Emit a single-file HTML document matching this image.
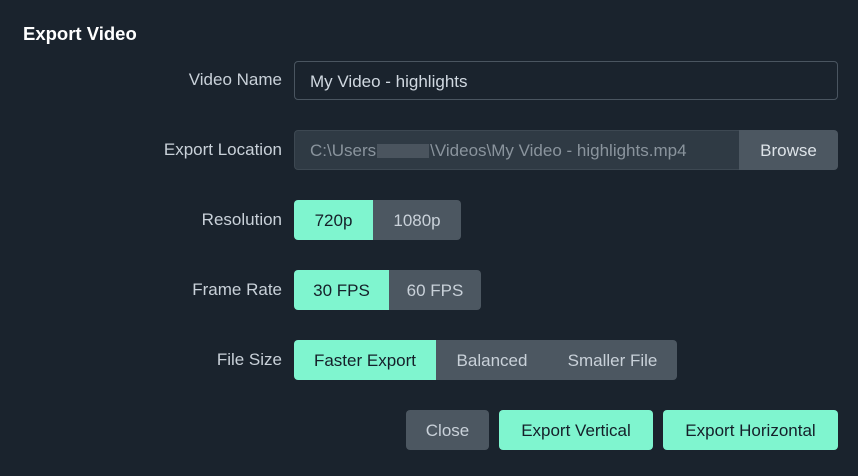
<!DOCTYPE html>
<html><head><style>
*{box-sizing:border-box;margin:0;padding:0}
body{width:858px;height:476px;background:#1a232d;font-family:"Liberation Sans",sans-serif;font-size:17px;position:relative;overflow:hidden;color:#c9d1d9}
.a{position:absolute;display:flex;align-items:center;justify-content:center;padding-top:2px}
.t{position:absolute;left:23px;top:23px;font-weight:bold;color:#fff;font-size:18.5px}
.l{position:absolute;right:576px;width:200px;text-align:right;color:#c9d1d9}
.g{background:#7ff5cf;color:#15202a}
.d{background:#4c5761;color:#c9d1d9}
</style></head><body>
<div class="t">Export Video</div>
<div class="l" style="top:70px">Video Name</div>
<div class="a" style="left:294px;top:61px;width:544px;height:39px;border:1px solid #4a5560;border-radius:4px;justify-content:flex-start;padding-left:15px;color:#d0d8e0">My Video - highlights</div>
<div class="l" style="top:140px">Export Location</div>
<div class="a" style="left:294px;top:130px;width:446px;height:40px;background:#2f3a44;border:1px solid #3d4852;border-radius:4px 0 0 4px;justify-content:flex-start;padding-left:15px;color:#8a949d">C:\Users<span style="display:inline-block;width:52px;height:14px;background:#4a545e;margin:0 1px"></span>\Videos\My Video - highlights.mp4</div>
<div class="a d" style="left:739px;top:130px;width:99px;height:40px;border-radius:0 4px 4px 0;color:#dde3e8">Browse</div>
<div class="l" style="top:210px">Resolution</div>
<div class="a g" style="left:294px;top:200px;width:79px;height:40px;border-radius:4px 0 0 4px">720p</div>
<div class="a d" style="left:373px;top:200px;width:88px;height:40px;border-radius:0 4px 4px 0">1080p</div>
<div class="l" style="top:280px">Frame Rate</div>
<div class="a g" style="left:294px;top:270px;width:95px;height:40px;border-radius:4px 0 0 4px">30 FPS</div>
<div class="a d" style="left:389px;top:270px;width:92px;height:40px;border-radius:0 4px 4px 0">60 FPS</div>
<div class="l" style="top:350px">File Size</div>
<div class="a g" style="left:294px;top:340px;width:142px;height:40px;border-radius:4px 0 0 4px">Faster Export</div>
<div class="a d" style="left:436px;top:340px;width:112px;height:40px">Balanced</div>
<div class="a d" style="left:548px;top:340px;width:129px;height:40px;border-radius:0 4px 4px 0">Smaller File</div>
<div class="a d" style="left:406px;top:410px;width:83px;height:40px;border-radius:4px">Close</div>
<div class="a g" style="left:499px;top:410px;width:154px;height:40px;border-radius:4px">Export Vertical</div>
<div class="a g" style="left:663px;top:410px;width:175px;height:40px;border-radius:4px">Export Horizontal</div>
</body></html>
